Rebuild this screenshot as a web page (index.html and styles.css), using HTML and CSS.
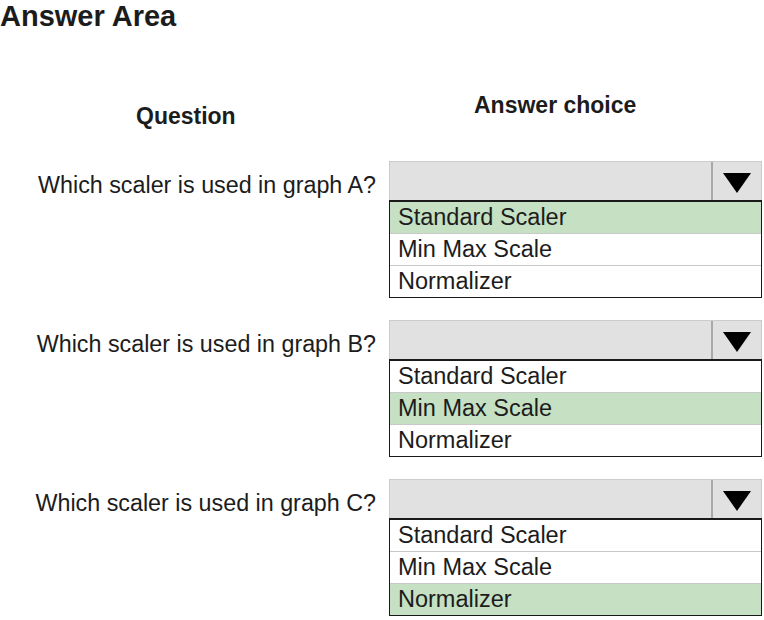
FILE: index.html
```html
<!DOCTYPE html>
<html lang="en">

<head>
  <meta charset="UTF-8">
  <title>Answer Area</title>
  <link rel="stylesheet" href="styles.css">
</head>

<body>
  <h2 class="title">Answer Area</h2>

  <div class="heads">
    <div class="head-question">Question</div>
    <div class="head-answer">Answer choice</div>
  </div>

  <div class="rows">
    <div class="row">
      <div class="question">Which scaler is used in graph A?</div>
      <div class="dropdown">
        <div class="select">
          <span class="select-value"></span>
          <span class="select-btn"><span class="arrow"></span></span>
        </div>
        <ul class="options">
          <li class="selected">Standard Scaler</li>
          <li>Min Max Scale</li>
          <li>Normalizer</li>
        </ul>
      </div>
    </div>

    <div class="row">
      <div class="question">Which scaler is used in graph B?</div>
      <div class="dropdown">
        <div class="select">
          <span class="select-value"></span>
          <span class="select-btn"><span class="arrow"></span></span>
        </div>
        <ul class="options">
          <li>Standard Scaler</li>
          <li class="selected">Min Max Scale</li>
          <li>Normalizer</li>
        </ul>
      </div>
    </div>

    <div class="row">
      <div class="question">Which scaler is used in graph C?</div>
      <div class="dropdown">
        <div class="select">
          <span class="select-value"></span>
          <span class="select-btn"><span class="arrow"></span></span>
        </div>
        <ul class="options">
          <li>Standard Scaler</li>
          <li>Min Max Scale</li>
          <li class="selected">Normalizer</li>
        </ul>
      </div>
    </div>
  </div>
</body>

</html>
```

FILE: styles.css
```css
:root {
  --text-color: #1c1c1c;
  --select-bg: #e1e1e1;
  --select-border: #cbcbcb;
  --list-border: #1a1a1a;
  --row-line: #c9c9c9;
  --selected-bg: #c5e0c3;
}

body {
  margin: 0;
  font-family: "Liberation Sans", Arial, sans-serif;
  color: var(--text-color);
  background: #fff;
}

.title {
  margin: 0;
  font-size: 29px;
  line-height: 33px;
  font-weight: bold;
}

.heads {
  display: grid;
  grid-template-columns: 389px 374px;
  margin-top: 59px;
  font-size: 23px;
  font-weight: bold;
  line-height: 26px;
}

.head-question {
  padding-left: 136px;
  margin-top: 11px;
}

.head-answer {
  padding-left: 85px;
}

.rows {
  display: flex;
  flex-direction: column;
  gap: 22px;
  margin-top: 32px;
}

.row {
  display: grid;
  grid-template-columns: 389px 373px;
}

.question {
  font-size: 23.3px;
  line-height: 26px;
  padding-top: 11px;
  padding-right: 13px;
  text-align: right;
}

.select {
  display: flex;
  height: 38px;
  background: var(--select-bg);
  border: 1px solid var(--select-border);
  border-bottom: none;
}

.select-value {
  flex: 1;
}

.select-btn {
  width: 48px;
  border-left: 2px solid #a9a9a9;
  display: flex;
  align-items: center;
  justify-content: center;
}

.arrow {
  width: 0;
  height: 0;
  border-left: 14px solid transparent;
  border-right: 14px solid transparent;
  border-top: 20px solid #000;
  margin-top: 3px;
}

.options {
  list-style: none;
  margin: 0;
  padding: 0;
  border: 1px solid var(--list-border);
  border-top-width: 2px;
}

.options li {
  height: 31px;
  line-height: 31px;
  padding-left: 8px;
  font-size: 23.5px;
  border-bottom: 1px solid var(--row-line);
}

.options li:last-child {
  border-bottom: none;
}

.options li.selected {
  background: var(--selected-bg);
}
```
